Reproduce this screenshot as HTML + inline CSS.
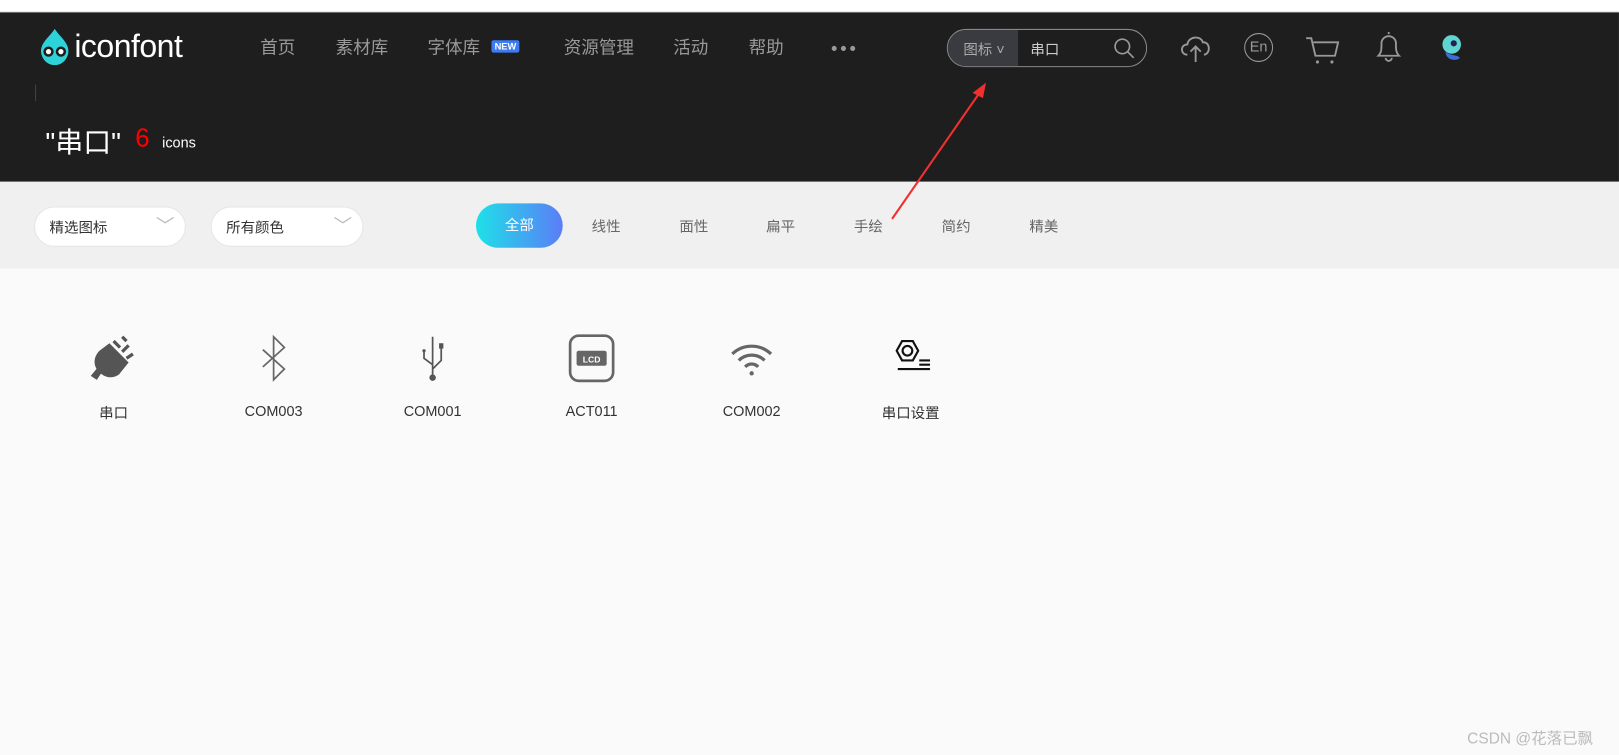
<!DOCTYPE html>
<html><head><meta charset="utf-8"><style>
*{margin:0;padding:0;box-sizing:border-box}
body{width:1619px;height:755px;overflow:hidden;background:#fafafa;font-family:"Liberation Sans","Noto Sans CJK SC",sans-serif}
#w{position:absolute;left:0;top:0;width:1568px;height:731px;transform:scale(1.0325);transform-origin:0 0}
.top{position:absolute;left:0;top:0;width:1568px;height:12px;background:#fff;border-bottom:1px solid #ddd}
.hdr{position:absolute;left:0;top:12px;width:1568px;height:164px;background:#1e1e1e}
.nav{position:absolute;top:20px;color:#999;font-size:17px}
.bar{position:absolute;top:176px;left:0;width:1568px;height:84px;background:#f0f0f0}
.sel{position:absolute;top:200px;height:39px;background:#fff;border-radius:20px;border:1px solid #e6e6e6;font-size:14px;color:#333;padding:9px 14px}
.tab{position:absolute;top:209px;font-size:14px;color:#666}
.it{position:absolute;top:320px;width:120px;text-align:center}
.it .lb{position:absolute;top:70px;width:120px;left:0;font-size:14px;color:#333}
.it svg{position:absolute;left:36px;top:2px}
</style></head><body><div id="w">
<div class="top"></div>
<div class="hdr">
<svg style="position:absolute;left:36px;top:16px" width="34" height="36" viewBox="0 0 34 36"><path d="M17 0 C22 8 32 14 30 24 C28 32 22 35 17 35 C12 35 6 32 4 24 C2 14 12 8 17 0Z" fill="#2ed3d9"/><circle cx="11" cy="22" r="5" fill="#1e1e1e"/><circle cx="23" cy="22" r="5" fill="#1e1e1e"/><circle cx="11" cy="22" r="2.5" fill="#fff"/><circle cx="23" cy="22" r="2.5" fill="#fff"/></svg>
<div style="position:absolute;left:72px;top:15px;color:#fff;font-size:31px;letter-spacing:-0.5px">iconfont</div>
<div class="nav" style="left:252px">首页</div>
<div class="nav" style="left:325px">素材库</div>
<div class="nav" style="left:414px">字体库</div>
<div style="position:absolute;left:476px;top:27px;background:#3b7cf5;color:#fff;font-size:9px;font-weight:bold;padding:1px 3px;border-radius:2px">NEW</div>
<div class="nav" style="left:546px">资源管理</div>
<div class="nav" style="left:652px">活动</div>
<div class="nav" style="left:725px">帮助</div>
<div class="nav" style="left:805px;letter-spacing:3px;font-weight:bold;top:26px">•••</div>
<div style="position:absolute;left:34px;top:70px;width:1px;height:16px;background:#444"></div>
<div style="position:absolute;left:917px;top:16px;width:194px;height:37px;border:1px solid #888;border-radius:19px;overflow:hidden">
<div style="position:absolute;left:0;top:0;width:68px;height:37px;background:#3a3b40;color:#aaa;font-size:14px;padding:9px 0 0 15px">图标 ˅</div>
<div style="position:absolute;left:80px;top:9px;color:#ccc;font-size:14px">串口</div>
<svg style="position:absolute;left:160px;top:7px" width="22" height="22" viewBox="0 0 22 22"><circle cx="9" cy="9" r="7" fill="none" stroke="#999" stroke-width="1.6"/><path d="M14 14l6 6" stroke="#999" stroke-width="1.6"/></svg></div>
<svg style="position:absolute;left:1141px;top:18px" width="34" height="32" viewBox="0 0 34 32"><path d="M9 23 C2 23 2 13 9 13 C10 5 22 4 24 11 C31 10 32 22 25 23" fill="none" stroke="#999" stroke-width="1.8"/><path d="M17 30V16M12 20l5-5 5 5" fill="none" stroke="#999" stroke-width="1.8"/></svg>
<div style="position:absolute;left:1205px;top:20px;width:28px;height:28px;border:1.6px solid #999;border-radius:50%;color:#999;font-size:14px;text-align:center;line-height:25px">En</div>
<svg style="position:absolute;left:1264px;top:22px" width="34" height="30" viewBox="0 0 34 30"><path d="M1 3h5l4 17h19l3-13H8" fill="none" stroke="#999" stroke-width="1.8"/><circle cx="12" cy="26" r="1.5" fill="#999"/><circle cx="26" cy="26" r="1.5" fill="#999"/></svg>
<svg style="position:absolute;left:1330px;top:17px" width="30" height="32" viewBox="0 0 30 32"><path d="M5 25h20c-3-3-3-6-3-12a7 7 0 0 0-14 0c0 6 0 9-3 12z M12 27a3 3 0 0 0 6 0 M15 4V2" fill="none" stroke="#999" stroke-width="1.8"/></svg>
<svg style="position:absolute;left:1392px;top:20px" width="28" height="30" viewBox="0 0 28 30"><ellipse cx="14" cy="11" rx="9" ry="9" fill="#5fd4d0"/><circle cx="16" cy="10" r="3" fill="#225"/><path d="M8 18c0 8 10 10 14 6-2-3-10-2-14-6z" fill="#3b6fd6"/></svg>
<div style="position:absolute;left:44px;top:104px;color:#fff;font-size:27px">"串口"</div>
<div style="position:absolute;left:131px;top:108px;color:#f00;font-size:25px">6</div>
<div style="position:absolute;left:157px;top:118px;color:#fff;font-size:14px">icons</div>
</div>
<div class="bar"></div>
<div class="sel" style="left:33px;width:147px">精选图标<span style="position:absolute;right:10px;top:4px;color:#bbb;font-size:18px">﹀</span></div>
<div class="sel" style="left:204px;width:148px">所有颜色<span style="position:absolute;right:10px;top:4px;color:#bbb;font-size:18px">﹀</span></div>
<div style="position:absolute;left:461px;top:197px;width:84px;height:43px;border-radius:22px;background:linear-gradient(90deg,#1ee0e8,#5b7df7);color:#fff;font-size:14px;text-align:center;line-height:43px">全部</div>
<div class="tab" style="left:573px">线性</div><div class="tab" style="left:658px">面性</div><div class="tab" style="left:742px">扁平</div><div class="tab" style="left:827px">手绘</div><div class="tab" style="left:912px">简约</div><div class="tab" style="left:997px">精美</div>
<svg style="position:absolute;left:0;top:0" width="1568" height="731"><path d="M864 212 L950 88" stroke="#f03030" stroke-width="2"/><path d="M955 80 L942 90 L952 95Z" fill="#f03030"/></svg>
<div class="it" style="left:50px"><svg width="48" height="50" viewBox="0 0 44 48"><path d="M18 12 L34 28 L26 38 C20 42 14 40 10 36 L6 42 L3 40 L8 34 C4 28 6 22 10 18Z M22 8 L28 14 M30 4 L34 8 M30 18 L36 12 M34 24 L40 20" fill="#555" stroke="#555" stroke-width="3"/></svg><div class="lb">串口</div></div>
<div class="it" style="left:205px"><svg width="48" height="50" viewBox="0 0 44 48"><path d="M12 16 L32 34 L22 44 V4 L32 14 L12 32" fill="none" stroke="#666" stroke-width="1.6"/></svg><div class="lb">COM003</div></div>
<div class="it" style="left:359px"><svg width="48" height="50" viewBox="0 0 44 48"><path d="M22 4V42 M22 30L14 24V18 M22 34L30 26V14" fill="none" stroke="#555" stroke-width="1.6"/><circle cx="22" cy="42" r="3" fill="#555"/><rect x="28" y="10" width="4" height="5" fill="#555"/><circle cx="14" cy="17" r="1.5" fill="#555"/></svg><div class="lb">COM001</div></div>
<div class="it" style="left:513px"><svg width="48" height="50" viewBox="0 0 44 48"><rect x="2" y="3" width="40" height="42" rx="8" fill="none" stroke="#666" stroke-width="2.5"/><rect x="8" y="17" width="28" height="14" rx="2" fill="#666"/><text x="22" y="28" font-size="8" fill="#fff" text-anchor="middle" font-family="Liberation Sans" font-weight="bold">LCD</text></svg><div class="lb">ACT011</div></div>
<div class="it" style="left:668px"><svg width="48" height="50" viewBox="0 0 44 48"><path d="M4 20 A26 26 0 0 1 40 20 M10 26 A17 17 0 0 1 34 26 M16 32 A8 8 0 0 1 28 32" fill="none" stroke="#666" stroke-width="3"/><circle cx="22" cy="38" r="2" fill="#666"/></svg><div class="lb">COM002</div></div>
<div class="it" style="left:822px"><svg width="48" height="50" viewBox="0 0 44 48"><path d="M14 8 L24 8 L29 17 L24 26 L14 26 L9 17Z" fill="none" stroke="#111" stroke-width="2"/><circle cx="19" cy="17" r="4.5" fill="none" stroke="#111" stroke-width="2"/><path d="M10 34H40 M30 26H40 M30 30H40" stroke="#111" stroke-width="2"/></svg><div class="lb">串口设置</div></div>
<div style="position:absolute;left:1421px;top:704px;color:#bbb;font-size:15px">CSDN @花落已飘</div>
</div></body></html>
